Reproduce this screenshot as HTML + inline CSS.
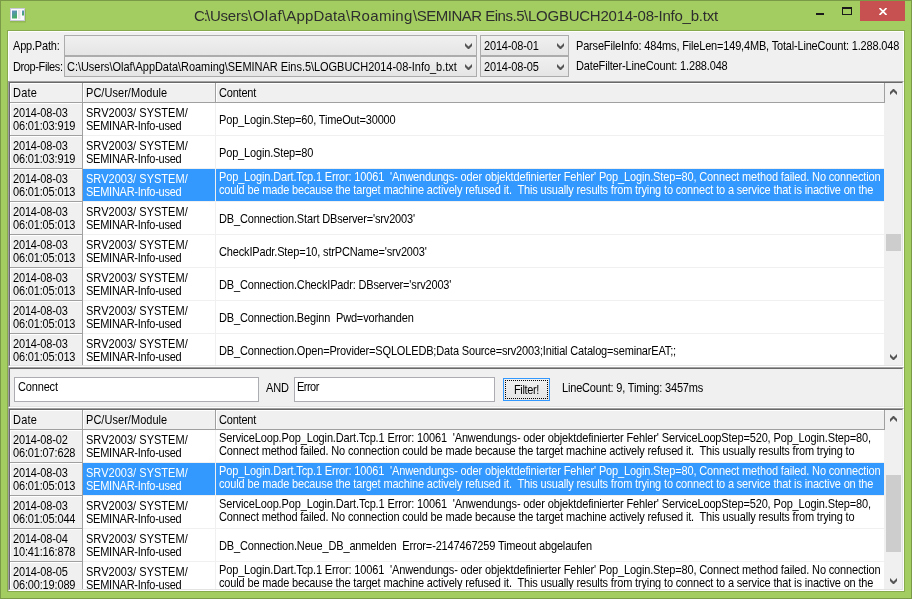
<!DOCTYPE html><html><head><meta charset="utf-8"><style>
html,body{margin:0;padding:0;width:912px;height:599px;overflow:hidden;background:#a3cd60;}
body{position:relative;font-family:"Liberation Sans", sans-serif;}
.t{position:absolute;white-space:pre;line-height:13px;height:13px;will-change:transform;transform:scaleY(1.1);transform-origin:0 10px;}
.tt{position:absolute;white-space:pre;will-change:transform;}
</style></head><body>

<div style="position:absolute;left:0px;top:0px;width:912px;height:599px;box-sizing:border-box;border:1px solid #7a9a48;background:#a3cd60"></div>
<div style="position:absolute;left:7px;top:30px;width:898px;height:562px;box-sizing:border-box;border:1px solid #86aa4c"></div>
<div style="position:absolute;left:8px;top:31px;width:896px;height:560px;box-sizing:border-box;border:1px solid #fff;background:#f0f0f0"></div>
<svg style="position:absolute;left:9px;top:8px" width="18" height="15" viewBox="0 0 18 15">
<defs><linearGradient id="ig" x1="0" y1="0" x2="0.4" y2="1"><stop offset="0" stop-color="#6a8ccc"/><stop offset="0.5" stop-color="#4f9a9a"/><stop offset="1" stop-color="#46ad62"/></linearGradient></defs>
<rect x="1" y="1.5" width="16" height="13" fill="rgba(60,90,30,0.18)"/>
<rect x="1.5" y="0.5" width="14" height="12" fill="#fbfbfd" stroke="#c9c9db"/>
<rect x="3" y="2.5" width="5" height="8" fill="url(#ig)"/>
<rect x="9" y="2" width="2.4" height="9" fill="#e6e6e8"/>
<rect x="13" y="2.5" width="2" height="5" fill="url(#ig)"/>
</svg>
<div class="tt" style="left:194px;top:6px;line-height:20px;height:20px;font-size:15px;letter-spacing:-1.0px;color:#2e2e2e">C:</div>
<div class="tt" style="left:206px;top:6px;line-height:20px;height:20px;font-size:15px;letter-spacing:-0.24px;color:#2e2e2e">\Users</div>
<div class="tt" style="left:247.9px;top:6px;line-height:20px;height:20px;font-size:15px;letter-spacing:0.5px;color:#2e2e2e">\Olaf</div>
<div class="tt" style="left:282.1px;top:6px;line-height:20px;height:20px;font-size:15px;letter-spacing:0.16px;color:#2e2e2e">\AppData</div>
<div class="tt" style="left:345.9px;top:6px;line-height:20px;height:20px;font-size:15px;letter-spacing:0.31px;color:#2e2e2e">\Roaming</div>
<div class="tt" style="left:412.6px;top:6px;line-height:20px;height:20px;font-size:15px;letter-spacing:-0.49px;color:#2e2e2e">\SEMINAR Eins.5</div>
<div class="tt" style="left:523.7px;top:6px;line-height:20px;height:20px;font-size:15px;letter-spacing:-0.24px;color:#2e2e2e">\LOGBUCH2014-08-Info_b.txt</div>
<div style="position:absolute;left:816px;top:13px;width:8px;height:2px;background:#1a1a1a"></div>
<div style="position:absolute;left:842px;top:7px;width:10px;height:8px;box-sizing:border-box;border:1px solid #1a1a1a;border-top-width:2px"></div>
<div style="position:absolute;left:860px;top:1px;width:45px;height:20px;background:#c75050"></div>
<svg style="position:absolute;left:879px;top:8px" width="8" height="7" viewBox="0 0 8 7"><path d="M0.5,0 L7.5,7 M7.5,0 L0.5,7" stroke="#fff" stroke-width="1.7"/></svg>
<div class="t" style="left:13px;top:40px;color:#000;font-size:11px;letter-spacing:-0.2px;">App.Path:</div>
<div class="t" style="left:13px;top:61px;color:#000;font-size:11px;letter-spacing:-0.38px;">Drop-Files:</div>
<div style="position:absolute;left:64px;top:35px;width:413px;height:21px;box-sizing:border-box;border:1px solid #acacac;background:linear-gradient(#f0f0f0,#e5e5e5)"></div>
<svg style="position:absolute;left:465px;top:43px" width="7" height="6" viewBox="0 0 7 6"><polygon points="0,0 3.5,3.5 7,0 7,3 3.5,6.5 0,3" fill="#555"/></svg>
<div style="position:absolute;left:64px;top:56px;width:413px;height:21px;box-sizing:border-box;border:1px solid #acacac;background:linear-gradient(#f0f0f0,#e5e5e5)"></div>
<svg style="position:absolute;left:465px;top:64px" width="7" height="6" viewBox="0 0 7 6"><polygon points="0,0 3.5,3.5 7,0 7,3 3.5,6.5 0,3" fill="#555"/></svg>
<div class="t" style="left:67px;top:61px;color:#000;font-size:11px;letter-spacing:-0.04px;">C:\Users\Olaf\AppData\Roaming\SEMINAR Eins.5\LOGBUCH2014-08-Info_b.txt</div>
<div style="position:absolute;left:480px;top:35px;width:89px;height:21px;box-sizing:border-box;border:1px solid #acacac;background:linear-gradient(#f0f0f0,#e5e5e5)"></div>
<svg style="position:absolute;left:557px;top:43px" width="7" height="6" viewBox="0 0 7 6"><polygon points="0,0 3.5,3.5 7,0 7,3 3.5,6.5 0,3" fill="#555"/></svg>
<div class="t" style="left:484px;top:40px;color:#000;font-size:11px;letter-spacing:-0.16px;">2014-08-01</div>
<div style="position:absolute;left:480px;top:56px;width:89px;height:21px;box-sizing:border-box;border:1px solid #acacac;background:linear-gradient(#f0f0f0,#e5e5e5)"></div>
<svg style="position:absolute;left:557px;top:64px" width="7" height="6" viewBox="0 0 7 6"><polygon points="0,0 3.5,3.5 7,0 7,3 3.5,6.5 0,3" fill="#555"/></svg>
<div class="t" style="left:484px;top:61px;color:#000;font-size:11px;letter-spacing:-0.16px;">2014-08-05</div>
<div class="t" style="left:576px;top:40px;color:#000;font-size:11px;letter-spacing:-0.176px;">ParseFileInfo: 484ms, FileLen=149,4MB, Total-LineCount: 1.288.048</div>
<div class="t" style="left:576px;top:60px;color:#000;font-size:11px;letter-spacing:-0.16px;">DateFilter-LineCount: 1.288.048</div>
<div style="position:absolute;left:8px;top:81px;width:896px;height:286px;box-sizing:border-box;border-style:solid;border-width:1px;border-color:#a0a0a0 #fff #fff #a0a0a0"></div>
<div style="position:absolute;left:9px;top:82px;width:894px;height:284px;box-sizing:border-box;border-style:solid;border-width:1px;border-color:#696969 #e3e3e3 #e3e3e3 #696969"></div>
<div style="position:absolute;left:10px;top:83px;width:892px;height:282px;overflow:hidden;background:#fff">
<div style="position:absolute;left:0px;top:0px;width:73px;height:20px;box-sizing:border-box;background:#f0f0f0;border-style:solid;border-width:0 1px 1px 0;border-color:#a0a0a0;box-shadow:inset 1px 1px #fff"></div>
<div class="t" style="left:2.5px;top:4px;color:#000;font-size:11px;letter-spacing:0.25px">Date</div>
<div style="position:absolute;left:73px;top:0px;width:133px;height:20px;box-sizing:border-box;background:#f0f0f0;border-style:solid;border-width:0 1px 1px 0;border-color:#a0a0a0;box-shadow:inset 1px 1px #fff"></div>
<div class="t" style="left:75.5px;top:4px;color:#000;font-size:11px;letter-spacing:0.04px">PC/User/Module</div>
<div style="position:absolute;left:206px;top:0px;width:669px;height:20px;box-sizing:border-box;background:#f0f0f0;border-style:solid;border-width:0 1px 1px 0;border-color:#a0a0a0;box-shadow:inset 1px 1px #fff"></div>
<div class="t" style="left:208.5px;top:4px;color:#000;font-size:11px;letter-spacing:-0.2px">Content</div>
<div style="position:absolute;left:0px;top:20px;width:73px;height:33px;box-sizing:border-box;background:#f0f0f0;border-style:solid;border-width:0 1px 1px 0;border-color:#a0a0a0;box-shadow:inset 1px 1px #fff"></div>
<div class="t" style="left:3px;top:24px;color:#000;font-size:11px;letter-spacing:-0.16px">2014-08-03</div>
<div class="t" style="left:3px;top:37px;color:#000;font-size:11px;letter-spacing:-0.16px">06:01:03:919</div>
<div style="position:absolute;left:73px;top:20px;width:133px;height:33px;box-sizing:border-box;background:#fff;border-style:solid;border-width:0 1px 1px 0;border-color:#f0f0f0"></div>
<div class="t" style="left:76px;top:24px;color:#000;font-size:11px;letter-spacing:0.03px">SRV2003/ SYSTEM/</div>
<div class="t" style="left:76px;top:37px;color:#000;font-size:11px;letter-spacing:-0.25px">SEMINAR-Info-used</div>
<div style="position:absolute;left:206px;top:20px;width:669px;height:33px;box-sizing:border-box;background:#fff;border-style:solid;border-width:0 1px 1px 0;border-color:#f0f0f0"></div>
<div class="t" style="left:209px;top:31px;color:#000;font-size:11px;letter-spacing:-0.16px">Pop_Login.Step=60, TimeOut=30000</div>
<div style="position:absolute;left:0px;top:53px;width:73px;height:33px;box-sizing:border-box;background:#f0f0f0;border-style:solid;border-width:0 1px 1px 0;border-color:#a0a0a0;box-shadow:inset 1px 1px #fff"></div>
<div class="t" style="left:3px;top:57px;color:#000;font-size:11px;letter-spacing:-0.16px">2014-08-03</div>
<div class="t" style="left:3px;top:70px;color:#000;font-size:11px;letter-spacing:-0.16px">06:01:03:919</div>
<div style="position:absolute;left:73px;top:53px;width:133px;height:33px;box-sizing:border-box;background:#fff;border-style:solid;border-width:0 1px 1px 0;border-color:#f0f0f0"></div>
<div class="t" style="left:76px;top:57px;color:#000;font-size:11px;letter-spacing:0.03px">SRV2003/ SYSTEM/</div>
<div class="t" style="left:76px;top:70px;color:#000;font-size:11px;letter-spacing:-0.25px">SEMINAR-Info-used</div>
<div style="position:absolute;left:206px;top:53px;width:669px;height:33px;box-sizing:border-box;background:#fff;border-style:solid;border-width:0 1px 1px 0;border-color:#f0f0f0"></div>
<div class="t" style="left:209px;top:64px;color:#000;font-size:11px;letter-spacing:-0.16px">Pop_Login.Step=80</div>
<div style="position:absolute;left:0px;top:86px;width:73px;height:33px;box-sizing:border-box;background:#f0f0f0;border-style:solid;border-width:0 1px 1px 0;border-color:#a0a0a0;box-shadow:inset 1px 1px #fff"></div>
<div class="t" style="left:3px;top:90px;color:#000;font-size:11px;letter-spacing:-0.16px">2014-08-03</div>
<div class="t" style="left:3px;top:103px;color:#000;font-size:11px;letter-spacing:-0.16px">06:01:05:013</div>
<div style="position:absolute;left:73px;top:86px;width:133px;height:33px;box-sizing:border-box;background:#3399ff;border-style:solid;border-width:0 1px 1px 0;border-color:#f0f0f0"></div>
<div class="t" style="left:76px;top:90px;color:#fff;font-size:11px;letter-spacing:0.03px">SRV2003/ SYSTEM/</div>
<div class="t" style="left:76px;top:103px;color:#fff;font-size:11px;letter-spacing:-0.25px">SEMINAR-Info-used</div>
<div style="position:absolute;left:206px;top:86px;width:669px;height:33px;box-sizing:border-box;background:#3399ff;border-style:solid;border-width:0 1px 1px 0;border-color:#f0f0f0"></div>
<div class="t" style="left:209px;top:88px;color:#fff;font-size:11px;letter-spacing:-0.144px">Pop_Login.Dart.Tcp.1 Error: 10061  'Anwendungs- oder objektdefinierter Fehler' Pop_Login.Step=80, Connect method failed. No connection</div>
<div class="t" style="left:209px;top:101px;color:#fff;font-size:11px;letter-spacing:-0.152px">could be made because the target machine actively refused it.  This usually results from trying to connect to a service that is inactive on the</div>
<div style="position:absolute;left:0px;top:119px;width:73px;height:33px;box-sizing:border-box;background:#f0f0f0;border-style:solid;border-width:0 1px 1px 0;border-color:#a0a0a0;box-shadow:inset 1px 1px #fff"></div>
<div class="t" style="left:3px;top:123px;color:#000;font-size:11px;letter-spacing:-0.16px">2014-08-03</div>
<div class="t" style="left:3px;top:136px;color:#000;font-size:11px;letter-spacing:-0.16px">06:01:05:013</div>
<div style="position:absolute;left:73px;top:119px;width:133px;height:33px;box-sizing:border-box;background:#fff;border-style:solid;border-width:0 1px 1px 0;border-color:#f0f0f0"></div>
<div class="t" style="left:76px;top:123px;color:#000;font-size:11px;letter-spacing:0.03px">SRV2003/ SYSTEM/</div>
<div class="t" style="left:76px;top:136px;color:#000;font-size:11px;letter-spacing:-0.25px">SEMINAR-Info-used</div>
<div style="position:absolute;left:206px;top:119px;width:669px;height:33px;box-sizing:border-box;background:#fff;border-style:solid;border-width:0 1px 1px 0;border-color:#f0f0f0"></div>
<div class="t" style="left:209px;top:130px;color:#000;font-size:11px;letter-spacing:-0.16px">DB_Connection.Start DBserver='srv2003'</div>
<div style="position:absolute;left:0px;top:152px;width:73px;height:33px;box-sizing:border-box;background:#f0f0f0;border-style:solid;border-width:0 1px 1px 0;border-color:#a0a0a0;box-shadow:inset 1px 1px #fff"></div>
<div class="t" style="left:3px;top:156px;color:#000;font-size:11px;letter-spacing:-0.16px">2014-08-03</div>
<div class="t" style="left:3px;top:169px;color:#000;font-size:11px;letter-spacing:-0.16px">06:01:05:013</div>
<div style="position:absolute;left:73px;top:152px;width:133px;height:33px;box-sizing:border-box;background:#fff;border-style:solid;border-width:0 1px 1px 0;border-color:#f0f0f0"></div>
<div class="t" style="left:76px;top:156px;color:#000;font-size:11px;letter-spacing:0.03px">SRV2003/ SYSTEM/</div>
<div class="t" style="left:76px;top:169px;color:#000;font-size:11px;letter-spacing:-0.25px">SEMINAR-Info-used</div>
<div style="position:absolute;left:206px;top:152px;width:669px;height:33px;box-sizing:border-box;background:#fff;border-style:solid;border-width:0 1px 1px 0;border-color:#f0f0f0"></div>
<div class="t" style="left:209px;top:163px;color:#000;font-size:11px;letter-spacing:-0.16px">CheckIPadr.Step=10, strPCName='srv2003'</div>
<div style="position:absolute;left:0px;top:185px;width:73px;height:33px;box-sizing:border-box;background:#f0f0f0;border-style:solid;border-width:0 1px 1px 0;border-color:#a0a0a0;box-shadow:inset 1px 1px #fff"></div>
<div class="t" style="left:3px;top:189px;color:#000;font-size:11px;letter-spacing:-0.16px">2014-08-03</div>
<div class="t" style="left:3px;top:202px;color:#000;font-size:11px;letter-spacing:-0.16px">06:01:05:013</div>
<div style="position:absolute;left:73px;top:185px;width:133px;height:33px;box-sizing:border-box;background:#fff;border-style:solid;border-width:0 1px 1px 0;border-color:#f0f0f0"></div>
<div class="t" style="left:76px;top:189px;color:#000;font-size:11px;letter-spacing:0.03px">SRV2003/ SYSTEM/</div>
<div class="t" style="left:76px;top:202px;color:#000;font-size:11px;letter-spacing:-0.25px">SEMINAR-Info-used</div>
<div style="position:absolute;left:206px;top:185px;width:669px;height:33px;box-sizing:border-box;background:#fff;border-style:solid;border-width:0 1px 1px 0;border-color:#f0f0f0"></div>
<div class="t" style="left:209px;top:196px;color:#000;font-size:11px;letter-spacing:-0.16px">DB_Connection.CheckIPadr: DBserver='srv2003'</div>
<div style="position:absolute;left:0px;top:218px;width:73px;height:33px;box-sizing:border-box;background:#f0f0f0;border-style:solid;border-width:0 1px 1px 0;border-color:#a0a0a0;box-shadow:inset 1px 1px #fff"></div>
<div class="t" style="left:3px;top:222px;color:#000;font-size:11px;letter-spacing:-0.16px">2014-08-03</div>
<div class="t" style="left:3px;top:235px;color:#000;font-size:11px;letter-spacing:-0.16px">06:01:05:013</div>
<div style="position:absolute;left:73px;top:218px;width:133px;height:33px;box-sizing:border-box;background:#fff;border-style:solid;border-width:0 1px 1px 0;border-color:#f0f0f0"></div>
<div class="t" style="left:76px;top:222px;color:#000;font-size:11px;letter-spacing:0.03px">SRV2003/ SYSTEM/</div>
<div class="t" style="left:76px;top:235px;color:#000;font-size:11px;letter-spacing:-0.25px">SEMINAR-Info-used</div>
<div style="position:absolute;left:206px;top:218px;width:669px;height:33px;box-sizing:border-box;background:#fff;border-style:solid;border-width:0 1px 1px 0;border-color:#f0f0f0"></div>
<div class="t" style="left:209px;top:229px;color:#000;font-size:11px;letter-spacing:-0.16px">DB_Connection.Beginn  Pwd=vorhanden</div>
<div style="position:absolute;left:0px;top:251px;width:73px;height:33px;box-sizing:border-box;background:#f0f0f0;border-style:solid;border-width:0 1px 1px 0;border-color:#a0a0a0;box-shadow:inset 1px 1px #fff"></div>
<div class="t" style="left:3px;top:255px;color:#000;font-size:11px;letter-spacing:-0.16px">2014-08-03</div>
<div class="t" style="left:3px;top:268px;color:#000;font-size:11px;letter-spacing:-0.16px">06:01:05:013</div>
<div style="position:absolute;left:73px;top:251px;width:133px;height:33px;box-sizing:border-box;background:#fff;border-style:solid;border-width:0 1px 1px 0;border-color:#f0f0f0"></div>
<div class="t" style="left:76px;top:255px;color:#000;font-size:11px;letter-spacing:0.03px">SRV2003/ SYSTEM/</div>
<div class="t" style="left:76px;top:268px;color:#000;font-size:11px;letter-spacing:-0.25px">SEMINAR-Info-used</div>
<div style="position:absolute;left:206px;top:251px;width:669px;height:33px;box-sizing:border-box;background:#fff;border-style:solid;border-width:0 1px 1px 0;border-color:#f0f0f0"></div>
<div class="t" style="left:209px;top:262px;color:#000;font-size:11px;letter-spacing:-0.16px">DB_Connection.Open=Provider=SQLOLEDB;Data Source=srv2003;Initial Catalog=seminarEAT;;</div>
<div style="position:absolute;left:875px;top:0px;width:17px;height:282px;background:#f0f0f0"></div>
</div>
<svg style="position:absolute;left:890px;top:89px" width="7" height="6" viewBox="0 0 7 6"><polygon points="0,6 3.5,2.5 7,6 7,3 3.5,-0.5 0,3" fill="#555"/></svg>
<svg style="position:absolute;left:890px;top:354px" width="7" height="6" viewBox="0 0 7 6"><polygon points="0,0 3.5,3.5 7,0 7,3 3.5,6.5 0,3" fill="#555"/></svg>
<div style="position:absolute;left:886px;top:234px;width:15px;height:17px;background:#cdcdcd"></div>
<div style="position:absolute;left:8px;top:367px;width:896px;height:41px;box-sizing:border-box;border-style:solid;border-width:1px;border-color:#a0a0a0 #fff #fff #a0a0a0"></div>
<div style="position:absolute;left:9px;top:368px;width:894px;height:39px;box-sizing:border-box;border-style:solid;border-width:1px;border-color:#696969 #e3e3e3 #e3e3e3 #696969"></div>
<div style="position:absolute;left:14px;top:377px;width:245px;height:25px;box-sizing:border-box;border:1px solid #abadb3;background:#fff"></div>
<div class="t" style="left:18px;top:381px;color:#000;font-size:11px;letter-spacing:-0.16px;">Connect</div>
<div class="t" style="left:266px;top:382px;color:#000;font-size:11px;letter-spacing:-0.16px;">AND</div>
<div style="position:absolute;left:294px;top:377px;width:201px;height:25px;box-sizing:border-box;border:1px solid #abadb3;background:#fff"></div>
<div class="t" style="left:297px;top:381px;color:#000;font-size:11px;letter-spacing:-0.52px;">Error</div>
<div style="position:absolute;left:503px;top:378px;width:47px;height:23px;box-sizing:border-box;border:1px solid #3399ff;background:linear-gradient(#f0f0f0,#e5e5e5)"></div>
<div style="position:absolute;left:505px;top:380px;width:43px;height:19px;box-sizing:border-box;border:1px dotted #000"></div>
<div class="t" style="left:514px;top:384px;color:#000;font-size:11px;letter-spacing:-0.36px;">Filter!</div>
<div class="t" style="left:562px;top:382px;color:#000;font-size:11px;letter-spacing:-0.18px;">LineCount: 9, Timing: 3457ms</div>
<div style="position:absolute;left:8px;top:408px;width:896px;height:183px;box-sizing:border-box;border-style:solid;border-width:1px;border-color:#a0a0a0 #fff #fff #a0a0a0"></div>
<div style="position:absolute;left:9px;top:409px;width:894px;height:181px;box-sizing:border-box;border-style:solid;border-width:1px;border-color:#696969 #e3e3e3 #e3e3e3 #696969"></div>
<div style="position:absolute;left:10px;top:410px;width:892px;height:179px;overflow:hidden;background:#fff">
<div style="position:absolute;left:0px;top:0px;width:73px;height:20px;box-sizing:border-box;background:#f0f0f0;border-style:solid;border-width:0 1px 1px 0;border-color:#a0a0a0;box-shadow:inset 1px 1px #fff"></div>
<div class="t" style="left:2.5px;top:4px;color:#000;font-size:11px;letter-spacing:0.25px">Date</div>
<div style="position:absolute;left:73px;top:0px;width:133px;height:20px;box-sizing:border-box;background:#f0f0f0;border-style:solid;border-width:0 1px 1px 0;border-color:#a0a0a0;box-shadow:inset 1px 1px #fff"></div>
<div class="t" style="left:75.5px;top:4px;color:#000;font-size:11px;letter-spacing:0.04px">PC/User/Module</div>
<div style="position:absolute;left:206px;top:0px;width:669px;height:20px;box-sizing:border-box;background:#f0f0f0;border-style:solid;border-width:0 1px 1px 0;border-color:#a0a0a0;box-shadow:inset 1px 1px #fff"></div>
<div class="t" style="left:208.5px;top:4px;color:#000;font-size:11px;letter-spacing:-0.2px">Content</div>
<div style="position:absolute;left:0px;top:20px;width:73px;height:33px;box-sizing:border-box;background:#f0f0f0;border-style:solid;border-width:0 1px 1px 0;border-color:#a0a0a0;box-shadow:inset 1px 1px #fff"></div>
<div class="t" style="left:3px;top:24px;color:#000;font-size:11px;letter-spacing:-0.16px">2014-08-02</div>
<div class="t" style="left:3px;top:37px;color:#000;font-size:11px;letter-spacing:-0.16px">06:01:07:628</div>
<div style="position:absolute;left:73px;top:20px;width:133px;height:33px;box-sizing:border-box;background:#fff;border-style:solid;border-width:0 1px 1px 0;border-color:#f0f0f0"></div>
<div class="t" style="left:76px;top:24px;color:#000;font-size:11px;letter-spacing:0.03px">SRV2003/ SYSTEM/</div>
<div class="t" style="left:76px;top:37px;color:#000;font-size:11px;letter-spacing:-0.25px">SEMINAR-Info-used</div>
<div style="position:absolute;left:206px;top:20px;width:669px;height:33px;box-sizing:border-box;background:#fff;border-style:solid;border-width:0 1px 1px 0;border-color:#f0f0f0"></div>
<div class="t" style="left:209px;top:22px;color:#000;font-size:11px;letter-spacing:-0.14px">ServiceLoop.Pop_Login.Dart.Tcp.1 Error: 10061  'Anwendungs- oder objektdefinierter Fehler' ServiceLoopStep=520, Pop_Login.Step=80,</div>
<div class="t" style="left:209px;top:35px;color:#000;font-size:11px;letter-spacing:-0.17px">Connect method failed. No connection could be made because the target machine actively refused it.  This usually results from trying to</div>
<div style="position:absolute;left:0px;top:53px;width:73px;height:33px;box-sizing:border-box;background:#f0f0f0;border-style:solid;border-width:0 1px 1px 0;border-color:#a0a0a0;box-shadow:inset 1px 1px #fff"></div>
<div class="t" style="left:3px;top:57px;color:#000;font-size:11px;letter-spacing:-0.16px">2014-08-03</div>
<div class="t" style="left:3px;top:70px;color:#000;font-size:11px;letter-spacing:-0.16px">06:01:05:013</div>
<div style="position:absolute;left:73px;top:53px;width:133px;height:33px;box-sizing:border-box;background:#3399ff;border-style:solid;border-width:0 1px 1px 0;border-color:#f0f0f0"></div>
<div class="t" style="left:76px;top:57px;color:#fff;font-size:11px;letter-spacing:0.03px">SRV2003/ SYSTEM/</div>
<div class="t" style="left:76px;top:70px;color:#fff;font-size:11px;letter-spacing:-0.25px">SEMINAR-Info-used</div>
<div style="position:absolute;left:206px;top:53px;width:669px;height:33px;box-sizing:border-box;background:#3399ff;border-style:solid;border-width:0 1px 1px 0;border-color:#f0f0f0"></div>
<div class="t" style="left:209px;top:55px;color:#fff;font-size:11px;letter-spacing:-0.144px">Pop_Login.Dart.Tcp.1 Error: 10061  'Anwendungs- oder objektdefinierter Fehler' Pop_Login.Step=80, Connect method failed. No connection</div>
<div class="t" style="left:209px;top:68px;color:#fff;font-size:11px;letter-spacing:-0.152px">could be made because the target machine actively refused it.  This usually results from trying to connect to a service that is inactive on the</div>
<div style="position:absolute;left:0px;top:86px;width:73px;height:33px;box-sizing:border-box;background:#f0f0f0;border-style:solid;border-width:0 1px 1px 0;border-color:#a0a0a0;box-shadow:inset 1px 1px #fff"></div>
<div class="t" style="left:3px;top:90px;color:#000;font-size:11px;letter-spacing:-0.16px">2014-08-03</div>
<div class="t" style="left:3px;top:103px;color:#000;font-size:11px;letter-spacing:-0.16px">06:01:05:044</div>
<div style="position:absolute;left:73px;top:86px;width:133px;height:33px;box-sizing:border-box;background:#fff;border-style:solid;border-width:0 1px 1px 0;border-color:#f0f0f0"></div>
<div class="t" style="left:76px;top:90px;color:#000;font-size:11px;letter-spacing:0.03px">SRV2003/ SYSTEM/</div>
<div class="t" style="left:76px;top:103px;color:#000;font-size:11px;letter-spacing:-0.25px">SEMINAR-Info-used</div>
<div style="position:absolute;left:206px;top:86px;width:669px;height:33px;box-sizing:border-box;background:#fff;border-style:solid;border-width:0 1px 1px 0;border-color:#f0f0f0"></div>
<div class="t" style="left:209px;top:88px;color:#000;font-size:11px;letter-spacing:-0.14px">ServiceLoop.Pop_Login.Dart.Tcp.1 Error: 10061  'Anwendungs- oder objektdefinierter Fehler' ServiceLoopStep=520, Pop_Login.Step=80,</div>
<div class="t" style="left:209px;top:101px;color:#000;font-size:11px;letter-spacing:-0.17px">Connect method failed. No connection could be made because the target machine actively refused it.  This usually results from trying to</div>
<div style="position:absolute;left:0px;top:119px;width:73px;height:33px;box-sizing:border-box;background:#f0f0f0;border-style:solid;border-width:0 1px 1px 0;border-color:#a0a0a0;box-shadow:inset 1px 1px #fff"></div>
<div class="t" style="left:3px;top:123px;color:#000;font-size:11px;letter-spacing:-0.16px">2014-08-04</div>
<div class="t" style="left:3px;top:136px;color:#000;font-size:11px;letter-spacing:-0.16px">10:41:16:878</div>
<div style="position:absolute;left:73px;top:119px;width:133px;height:33px;box-sizing:border-box;background:#fff;border-style:solid;border-width:0 1px 1px 0;border-color:#f0f0f0"></div>
<div class="t" style="left:76px;top:123px;color:#000;font-size:11px;letter-spacing:0.03px">SRV2003/ SYSTEM/</div>
<div class="t" style="left:76px;top:136px;color:#000;font-size:11px;letter-spacing:-0.25px">SEMINAR-Info-used</div>
<div style="position:absolute;left:206px;top:119px;width:669px;height:33px;box-sizing:border-box;background:#fff;border-style:solid;border-width:0 1px 1px 0;border-color:#f0f0f0"></div>
<div class="t" style="left:209px;top:130px;color:#000;font-size:11px;letter-spacing:-0.16px">DB_Connection.Neue_DB_anmelden  Error=-2147467259 Timeout abgelaufen</div>
<div style="position:absolute;left:0px;top:152px;width:73px;height:33px;box-sizing:border-box;background:#f0f0f0;border-style:solid;border-width:0 1px 1px 0;border-color:#a0a0a0;box-shadow:inset 1px 1px #fff"></div>
<div class="t" style="left:3px;top:156px;color:#000;font-size:11px;letter-spacing:-0.16px">2014-08-05</div>
<div class="t" style="left:3px;top:169px;color:#000;font-size:11px;letter-spacing:-0.16px">06:00:19:089</div>
<div style="position:absolute;left:73px;top:152px;width:133px;height:33px;box-sizing:border-box;background:#fff;border-style:solid;border-width:0 1px 1px 0;border-color:#f0f0f0"></div>
<div class="t" style="left:76px;top:156px;color:#000;font-size:11px;letter-spacing:0.03px">SRV2003/ SYSTEM/</div>
<div class="t" style="left:76px;top:169px;color:#000;font-size:11px;letter-spacing:-0.25px">SEMINAR-Info-used</div>
<div style="position:absolute;left:206px;top:152px;width:669px;height:33px;box-sizing:border-box;background:#fff;border-style:solid;border-width:0 1px 1px 0;border-color:#f0f0f0"></div>
<div class="t" style="left:209px;top:154px;color:#000;font-size:11px;letter-spacing:-0.144px">Pop_Login.Dart.Tcp.1 Error: 10061  'Anwendungs- oder objektdefinierter Fehler' Pop_Login.Step=80, Connect method failed. No connection</div>
<div class="t" style="left:209px;top:167px;color:#000;font-size:11px;letter-spacing:-0.152px">could be made because the target machine actively refused it.  This usually results from trying to connect to a service that is inactive on the</div>
<div style="position:absolute;left:875px;top:0px;width:17px;height:179px;background:#f0f0f0"></div>
</div>
<svg style="position:absolute;left:890px;top:416px" width="7" height="6" viewBox="0 0 7 6"><polygon points="0,6 3.5,2.5 7,6 7,3 3.5,-0.5 0,3" fill="#555"/></svg>
<svg style="position:absolute;left:890px;top:578px" width="7" height="6" viewBox="0 0 7 6"><polygon points="0,0 3.5,3.5 7,0 7,3 3.5,6.5 0,3" fill="#555"/></svg>
<div style="position:absolute;left:886px;top:475px;width:15px;height:77px;background:#cdcdcd"></div>
</body></html>
